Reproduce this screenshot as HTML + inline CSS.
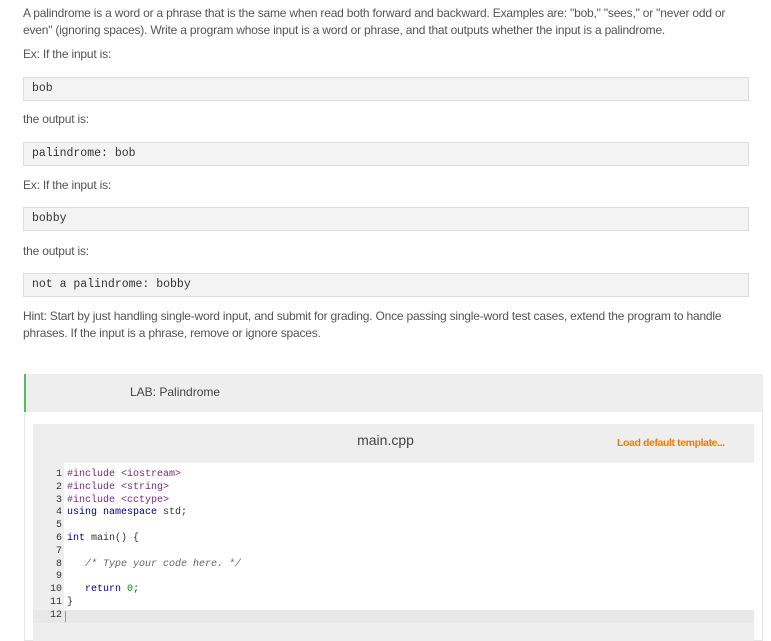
<!DOCTYPE html>
<html><head><style>
body{margin:0;background:#fff;width:771px;height:641px;overflow:hidden;font-family:"Liberation Sans",sans-serif;font-size:12px;color:#555;position:relative}
.t{position:absolute;left:23px;white-space:nowrap;letter-spacing:-0.2px}
.box{position:absolute;left:23px;width:716px;height:22px;background:#f3f3f3;border:1px solid #ddd;font-family:"Liberation Mono",monospace;font-size:11.5px;color:#333;line-height:22px;padding-left:8px;box-sizing:content-box}
.code{position:absolute;font-family:"Liberation Mono",monospace;font-size:10px;line-height:12.8px;white-space:pre}
.kw{color:#00008b}.inc{color:#7a2b7a}.cm{color:#666;font-style:italic}.num{color:#090}
</style></head><body>
<div class="t" style="top:6px">A palindrome is a word or a phrase that is the same when read both forward and backward. Examples are: "bob," "sees," or "never odd or</div>
<div class="t" style="top:23px">even" (ignoring spaces). Write a program whose input is a word or phrase, and that outputs whether the input is a palindrome.</div>
<div class="t" style="top:47px">Ex: If the input is:</div>
<div class="box" style="top:77px">bob</div>
<div class="t" style="top:112px">the output is:</div>
<div class="box" style="top:142px">palindrome: bob</div>
<div class="t" style="top:178px">Ex: If the input is:</div>
<div class="box" style="top:207px">bobby</div>
<div class="t" style="top:244px">the output is:</div>
<div class="box" style="top:273px">not a palindrome: bobby</div>
<div class="t" style="top:309px">Hint: Start by just handling single-word input, and submit for grading. Once passing single-word test cases, extend the program to handle</div>
<div class="t" style="top:326px">phrases. If the input is a phrase, remove or ignore spaces.</div>

<div style="position:absolute;left:24px;top:374px;width:739px;height:267px;border:1px solid #e6e6e6;box-sizing:border-box"></div>
<div style="position:absolute;left:24px;top:374px;width:739px;height:38px;background:#eee;border-left:2px solid #5cb85c;box-sizing:border-box"></div>
<div style="position:absolute;left:130px;top:385px;font-size:12px;color:#444">LAB: Palindrome</div>
<div style="position:absolute;left:33px;top:424px;width:721px;height:217px;background:#eee"></div>
<div style="position:absolute;left:0;width:771px;top:432px;text-align:center;font-size:14px;color:#444">main.cpp</div>
<div style="position:absolute;left:617px;top:437px;font-size:10.5px;font-weight:bold;color:#f57c00;letter-spacing:-0.4px">Load default template...</div>
<div style="position:absolute;left:64px;top:463px;width:690px;height:160px;background:#fff"></div>
<div style="position:absolute;left:33px;top:610px;width:721px;height:13px;background:#e8e8e8"></div>
<div style="position:absolute;left:65px;top:611px;width:1px;height:11px;background:#999"></div>
<div class="code" style="left:33px;top:469px;width:29px;text-align:right;color:#333">1
2
3
4
5
6
7
8
9
10
11
12</div>
<div class="code" style="left:67px;top:469px;color:#333"><span class="inc">#include &lt;iostream&gt;</span>
<span class="inc">#include &lt;string&gt;</span>
<span class="inc">#include &lt;cctype&gt;</span>
<span class="kw">using namespace</span> std;

<span class="kw">int</span> main() {

   <span class="cm">/* Type your code here. */</span>

   <span class="kw">return</span> <span class="num">0</span>;
}</div>
</body></html>
